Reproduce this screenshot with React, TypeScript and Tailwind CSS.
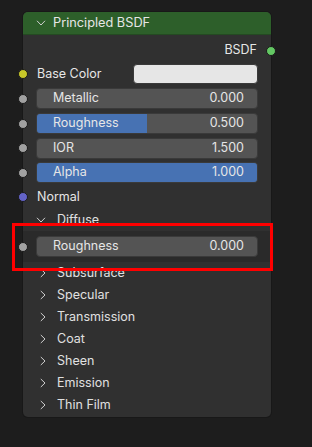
import type { ReactNode } from "react";

// Socket colours taken from the node editor theme
const SOCKET = {
  gray: "bg-[#a1a1a1]",
  yellow: "bg-[#c7c729]",
  purple: "bg-[#6363c7]",
  green: "bg-[#63c763]",
};

function Socket({ color, side = "left" }: { color: string; side?: "left" | "right" }) {
  return (
    <span
      className={`absolute top-1/2 -translate-y-1/2 w-[10px] h-[10px] rounded-full border-[1.5px] border-[#1a1a1a] ${color} ${
        side === "left" ? "left-[-5px]" : "right-[-5px]"
      }`}
    />
  );
}

function Row({ h, children }: { h: string; children: ReactNode }) {
  return <div className={`relative flex items-center px-[13px] ${h}`}>{children}</div>;
}

// Slider field, fill is the blue part (0..1)
function Field({ label, value, fill = 0 }: { label: string; value: string; fill?: number }) {
  return (
    <div className="relative flex-1 h-[21px] rounded-[4px] bg-[#545454] border border-[#3a3a3a] overflow-hidden">
      {fill > 0 && (
        <div className="absolute inset-y-0 left-0 bg-[#4772b3]" style={{ width: `${fill * 100}%` }} />
      )}
      <div className="relative flex items-center justify-between h-full pl-[16px] pr-[13px] text-[#e6e6e6]">
        <span>{label}</span>
        <span>{value}</span>
      </div>
    </div>
  );
}

function ChevronDown() {
  return (
    <svg width="10" height="6" viewBox="0 0 10 6" className="shrink-0">
      <polyline points="1,0.8 5,5 9,0.8" fill="none" stroke="#cfcfcf" strokeWidth="1" />
    </svg>
  );
}

function ChevronRight() {
  return (
    <svg width="6" height="10" viewBox="0 0 6 10" className="shrink-0">
      <polyline points="0.8,1 5,5 0.8,9" fill="none" stroke="#cfcfcf" strokeWidth="1" />
    </svg>
  );
}

const closedPanels = ["Subsurface", "Specular", "Transmission", "Coat", "Sheen", "Emission", "Thin Film"];

export default function App() {
  return (
    <div
      className="relative min-h-[447px] bg-[#1d1d1d] pt-[12px] pl-[23px] text-[12.5px] leading-none"
      style={{ fontFamily: "Inter, 'Noto Sans', sans-serif" }}
    >
      <div className="w-[248px] rounded-[5px] bg-[#303030] shadow-[0_0_0_1px_#181818]">
        {/* Header */}
        <div className="flex items-center gap-[7px] h-[23px] pl-[13px] rounded-t-[5px] bg-[#2d5f2a] text-[12.75px] text-[#e6e6e6] border-b border-[#244a22]">
          <ChevronDown />
          <span>Principled BSDF</span>
        </div>

        <div className="pt-[4px] pb-[1px]">
          <Row h="h-[23px]">
            <span className="ml-auto mr-[1px] text-[#e6e6e6]">BSDF</span>
            <Socket color={SOCKET.green} side="right" />
          </Row>

          <Row h="h-[24px]">
            <Socket color={SOCKET.yellow} />
            <span className="ml-[1px] text-[#e6e6e6]">Base Color</span>
            <div className="ml-auto w-[125px] h-[20px] rounded-[4px] bg-[#e6e6e6] border border-[#3a3a3a]" />
          </Row>

          <Row h="h-[25px]">
            <Socket color={SOCKET.gray} />
            <Field label="Metallic" value="0.000" />
          </Row>
          <Row h="h-[25px]">
            <Socket color={SOCKET.gray} />
            <Field label="Roughness" value="0.500" fill={0.5} />
          </Row>
          <Row h="h-[24px]">
            <Socket color={SOCKET.gray} />
            <Field label="IOR" value="1.500" />
          </Row>
          <Row h="h-[25px]">
            <Socket color={SOCKET.gray} />
            <Field label="Alpha" value="1.000" fill={1} />
          </Row>

          <Row h="h-[24px]">
            <Socket color={SOCKET.purple} />
            <span className="ml-[1px] text-[#e6e6e6]">Normal</span>
          </Row>

          {/* Diffuse panel (open) */}
          <div className="flex items-center gap-[11px] h-[22px] pl-[13px] text-[#e0e0e0]">
            <ChevronDown />
            <span>Diffuse</span>
          </div>
          <div className="bg-[#2a2a2a]">
            <Row h="h-[31px]">
              <Socket color={SOCKET.gray} />
              <Field label="Roughness" value="0.000" />
            </Row>
          </div>

          {closedPanels.map((name) => (
            <div key={name} className="flex items-center h-[22px] pl-[17px] text-[#e0e0e0]">
              <ChevronRight />
              <span className="ml-[11px]">{name}</span>
            </div>
          ))}
        </div>
      </div>

      {/* red highlight drawn over the node */}
      <div className="absolute left-[12px] top-[223px] w-[261px] h-[48px] border-[3px] border-[#ff0000] pointer-events-none" />
    </div>
  );
}
